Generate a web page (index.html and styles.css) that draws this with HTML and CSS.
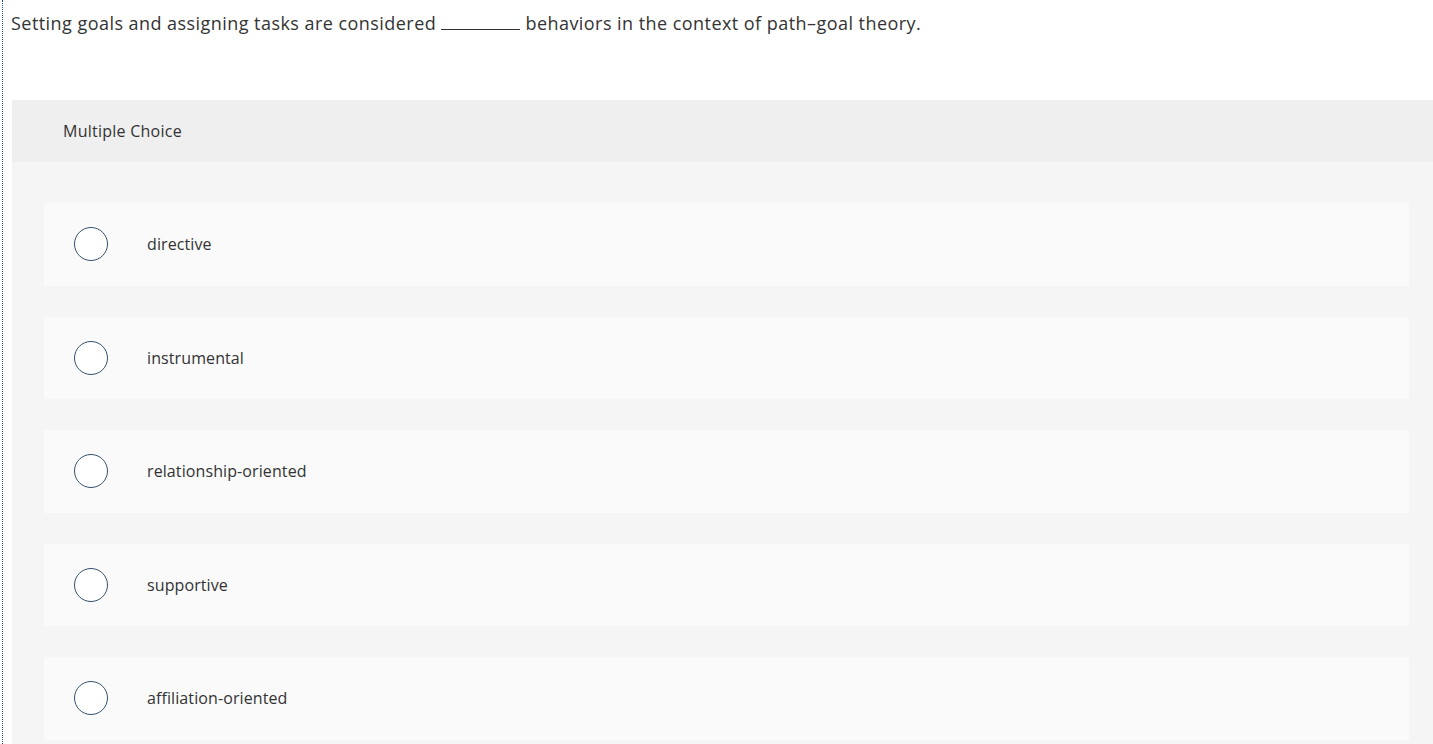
FILE: index.html
```html
<!DOCTYPE html>
<html lang="en">
<head>
<meta charset="utf-8">
<title>Multiple Choice</title>
<link rel="stylesheet" href="styles.css">
</head>
<body>
<div class="frame">
  <p class="question">Setting goals and assigning tasks are considered <span class="blank"></span> behaviors in the context of path–goal theory.</p>
  <section class="panel">
    <header class="panel-head">Multiple Choice</header>
    <div class="choices">
      <label class="choice"><span class="radio"></span><span class="label">directive</span></label>
      <label class="choice"><span class="radio"></span><span class="label">instrumental</span></label>
      <label class="choice"><span class="radio"></span><span class="label">relationship-oriented</span></label>
      <label class="choice"><span class="radio"></span><span class="label">supportive</span></label>
      <label class="choice"><span class="radio"></span><span class="label">affiliation-oriented</span></label>
    </div>
  </section>
</div>
</body>
</html>
```
FILE: styles.css
```css
html, body {
  margin: 0;
  padding: 0;
  background: #ffffff;
  height: 100%;
  overflow: hidden;
}
body {
  font-family: "Open Sans", Lato, Arial, sans-serif;
  color: #333333;
}
.frame {
  margin-left: 2px;
  border-left: 1px dotted #25508a;
  min-height: 100%;
  box-sizing: border-box;
}
.question {
  margin: 0;
  padding: 10px 0 0 8px;
  height: 100px;
  box-sizing: border-box;
  font-size: 18px;
  letter-spacing: 0.45px;
  line-height: 27px;
  color: #333333;
}
.blank {
  display: inline-block;
  width: 79px;
  height: 1px;
  border-bottom: 1px solid #333333;
  vertical-align: baseline;
}
.panel {
  margin-left: 9px;
  background: #f5f5f5;
  min-height: 644px;
}
.panel-head {
  height: 62px;
  background: #efefef;
  display: flex;
  align-items: center;
  padding-left: 51px;
  font-size: 16px;
  letter-spacing: 0.25px;
  color: #333333;
}
.choices {
  display: flex;
  flex-direction: column;
  gap: 31px;
  padding: 41px 24px 0 32px;
}
.choice {
  height: 82.5px;
  background: #fafafa;
  display: flex;
  align-items: center;
  padding-left: 30px;
}
.radio {
  width: 32px;
  height: 32px;
  border: 1.5px solid #34506a;
  border-radius: 50%;
  background: #ffffff;
  flex: none;
}
.label {
  margin-left: 39px;
  font-size: 16px;
  letter-spacing: 0.1px;
  color: #333333;
}
```
